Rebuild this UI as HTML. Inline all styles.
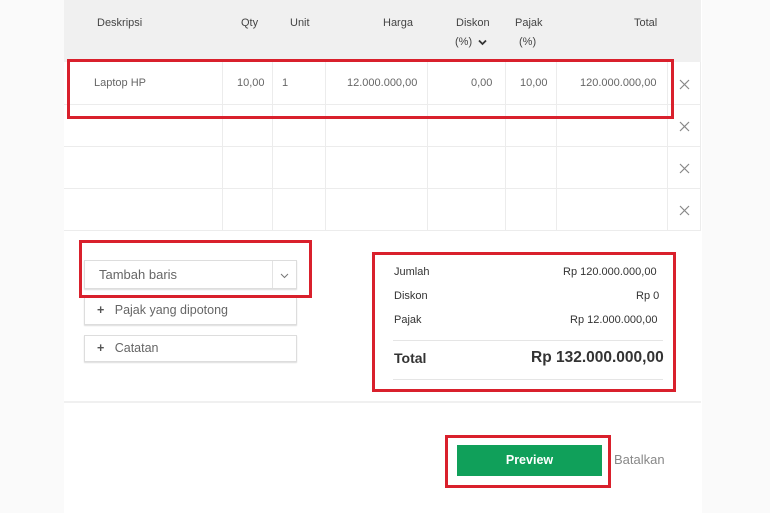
<!DOCTYPE html>
<html><head><style>
*{margin:0;padding:0;box-sizing:border-box}
body{width:770px;height:513px;background:#fafafa;position:relative;overflow:hidden;font-family:"Liberation Sans",sans-serif;color:#333}
.a{position:absolute}
.main{left:64px;top:0;width:638px;height:513px;background:#fff}
.hdr{left:64px;top:0;width:637px;height:62px;background:#f0f0f0}
.t{font-size:11px;color:#444;position:absolute;white-space:nowrap}
.vl{position:absolute;width:1px;background:#ececec;top:62px;height:168px}
.hl{position:absolute;height:1px;background:#ececec;left:64px;width:637px}
.red{position:absolute;border:3px solid #d9202c}
.x{position:absolute;left:679px;width:11px;height:11px}
.btn{position:absolute;background:#fff;border:1px solid #ddd;box-shadow:0 1px 1px #ddd;font-size:12.5px;color:#666}
</style></head><body>
<div class="a main"></div>
<div class="a hdr"></div>
<div class="t" style="left:97px;top:17px">Deskripsi</div>
<div class="t" style="left:241px;top:17px">Qty</div>
<div class="t" style="left:290px;top:17px">Unit</div>
<div class="t" style="left:383px;top:17px">Harga</div>
<div class="t" style="left:456px;top:17px">Diskon</div>
<div class="t" style="left:455px;top:36px">(%)</div>
<svg class="a" style="left:478px;top:39px" width="9" height="7"><path d="M1 1.5 L4.5 5 L8 1.5" stroke="#333" stroke-width="1.8" fill="none"/></svg>
<div class="t" style="left:515px;top:17px">Pajak</div>
<div class="t" style="left:519px;top:36px">(%)</div>
<div class="t" style="left:634px;top:17px">Total</div>

<div class="vl" style="left:222px"></div>
<div class="vl" style="left:272px"></div>
<div class="vl" style="left:325px"></div>
<div class="vl" style="left:427px"></div>
<div class="vl" style="left:505px"></div>
<div class="vl" style="left:556px"></div>
<div class="vl" style="left:667px"></div>
<div class="vl" style="left:700px"></div>
<div class="hl" style="top:104px"></div>
<div class="hl" style="top:146px"></div>
<div class="hl" style="top:188px"></div>
<div class="hl" style="top:230px"></div>

<div class="t" style="left:94px;top:77px;color:#666">Laptop HP</div>
<div class="t" style="left:237px;top:77px;color:#666">10,00</div>
<div class="t" style="left:282px;top:77px;color:#666">1</div>
<div class="t" style="left:347px;top:77px;color:#666">12.000.000,00</div>
<div class="t" style="left:471px;top:77px;color:#666">0,00</div>
<div class="t" style="left:520px;top:77px;color:#666">10,00</div>
<div class="t" style="left:580px;top:77px;color:#666">120.000.000,00</div>
<svg class="x" style="top:79px"><path d="M1 1L10 10M10 1L1 10" stroke="#888" stroke-width="1.2"/></svg>
<svg class="x" style="top:121px"><path d="M1 1L10 10M10 1L1 10" stroke="#888" stroke-width="1.2"/></svg>
<svg class="x" style="top:163px"><path d="M1 1L10 10M10 1L1 10" stroke="#888" stroke-width="1.2"/></svg>
<svg class="x" style="top:205px"><path d="M1 1L10 10M10 1L1 10" stroke="#888" stroke-width="1.2"/></svg>
<div class="red" style="left:67px;top:59px;width:607px;height:60px"></div>

<div class="btn" style="left:84px;top:260px;width:213px;height:29px"><span style="position:absolute;left:14px;top:6px;font-size:13px">Tambah baris</span><span style="position:absolute;left:187px;top:0;width:1px;height:27px;background:#e3e3e3"></span><svg style="position:absolute;left:195px;top:12px" width="9" height="6"><path d="M1 1L4.5 4.5L8 1" stroke="#777" stroke-width="1" fill="none"/></svg></div>
<div class="red" style="left:79px;top:240px;width:233px;height:58px"></div>
<div class="btn" style="left:84px;top:298px;width:213px;height:27px;border-top:none"><span style="position:absolute;left:12px;top:5px"><b style="color:#555">+</b>&nbsp;&nbsp; Pajak yang dipotong</span></div>
<div class="btn" style="left:84px;top:335px;width:213px;height:27px"><span style="position:absolute;left:12px;top:5px"><b style="color:#555">+</b>&nbsp;&nbsp; Catatan</span></div>

<div class="t" style="left:394px;top:266px;color:#333">Jumlah</div>
<div class="t" style="left:563px;top:266px;color:#333">Rp 120.000.000,00</div>
<div class="t" style="left:394px;top:290px;color:#333">Diskon</div>
<div class="t" style="left:636px;top:290px;color:#333">Rp 0</div>
<div class="t" style="left:394px;top:314px;color:#333">Pajak</div>
<div class="t" style="left:570px;top:314px;color:#333">Rp 12.000.000,00</div>
<div class="a" style="left:393px;top:340px;width:270px;height:1px;background:#e5e5e5"></div>
<div class="t" style="left:394px;top:350px;font-size:14px;font-weight:bold;color:#333">Total</div>
<div class="t" style="left:531px;top:349px;font-size:15.5px;font-weight:bold;color:#333">Rp 132.000.000,00</div>
<div class="a" style="left:393px;top:379px;width:270px;height:1px;background:#e5e5e5"></div>
<div class="red" style="left:372px;top:252px;width:304px;height:140px"></div>

<div class="a" style="left:64px;top:401px;width:637px;height:2px;background:#f0f0f0"></div>

<div class="a" style="left:457px;top:445px;width:145px;height:31px;background:#10a05a;color:#fff;font-weight:bold;font-size:12.5px;text-align:center;line-height:31px">Preview</div>
<div class="red" style="left:445px;top:435px;width:166px;height:53px"></div>
<div class="t" style="left:614px;top:452px;font-size:13px;color:#888">Batalkan</div>
</body></html>
